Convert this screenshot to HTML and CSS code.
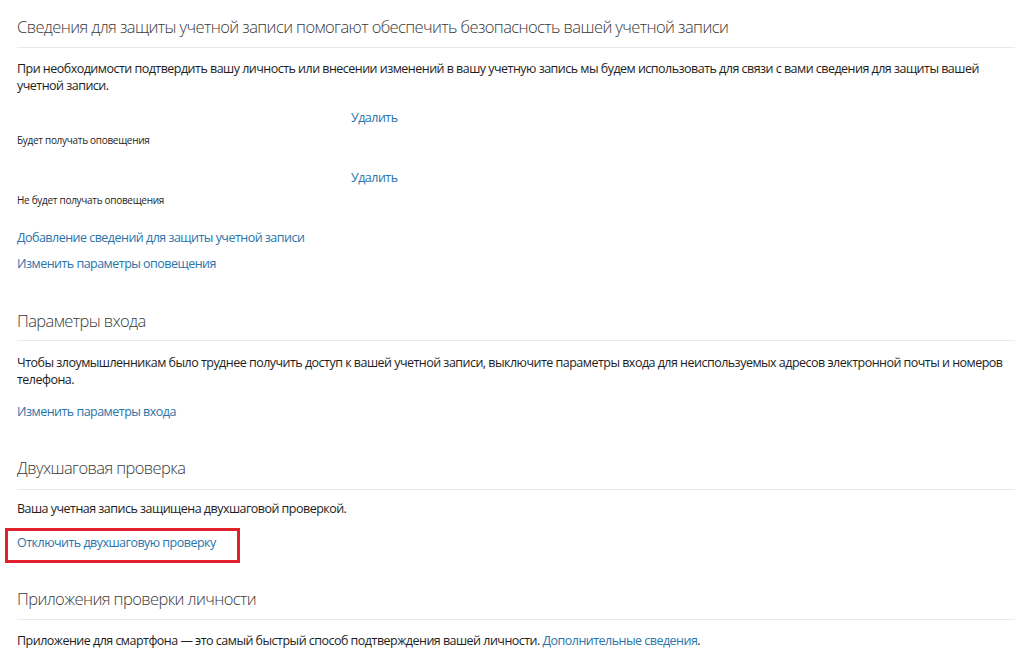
FILE: index.html
```html
<!DOCTYPE html>
<html lang="ru">
<head>
<meta charset="utf-8">
<link rel="stylesheet" href="styles.css">
</head>
<body>
<main class="page">
  <section class="sec sec-first">
    <h2 class="sec-title">Сведения для защиты учетной записи помогают обеспечить безопасность вашей учетной записи</h2>
    <p class="text text-intro">При необходимости подтвердить вашу личность или внесении изменений в вашу учетную запись мы будем использовать для связи с вами сведения для защиты вашей учетной записи.</p>
    <div class="proof">
      <div class="proof-row"><span class="proof-name"></span><a class="link" href="#">Удалить</a></div>
      <div class="proof-note">Будет получать оповещения</div>
    </div>
    <div class="proof proof-next">
      <div class="proof-row"><span class="proof-name"></span><a class="link" href="#">Удалить</a></div>
      <div class="proof-note">Не будет получать оповещения</div>
    </div>
    <a class="link link-block link-add" href="#">Добавление сведений для защиты учетной записи</a>
    <a class="link link-block link-notify" href="#">Изменить параметры оповещения</a>
  </section>

  <section class="sec sec-signin">
    <h2 class="sec-title">Параметры входа</h2>
    <p class="text text-signin">Чтобы злоумышленникам было труднее получить доступ к вашей учетной записи, выключите параметры входа для неиспользуемых адресов электронной почты и номеров телефона.</p>
    <a class="link link-block link-signin" href="#">Изменить параметры входа</a>
  </section>

  <section class="sec sec-twostep">
    <h2 class="sec-title">Двухшаговая проверка</h2>
    <p class="text text-twostep">Ваша учетная запись защищена двухшаговой проверкой.</p>
    <div class="highlight"><a class="link" href="#">Отключить двухшаговую проверку</a></div>
  </section>

  <section class="sec sec-apps">
    <h2 class="sec-title">Приложения проверки личности</h2>
    <p class="text text-apps">Приложение для смартфона — это самый быстрый способ подтверждения вашей личности. <a class="link" href="#">Дополнительные сведения</a>.</p>
  </section>
</main>
</body>
</html>
```

FILE: styles.css
```css
* { box-sizing: border-box; }
html, body { margin: 0; padding: 0; background: #fff; }
body {
  font-family: "Open Sans", "Noto Sans", "Liberation Sans", sans-serif;
  color: #1e1e1e;
  overflow: hidden;
}
.page {
  width: 1015px;
  padding-left: 17px;
}
.sec-title {
  margin: 0;
  font-size: 16.5px;
  font-weight: 300;
  letter-spacing: -0.6px;
  line-height: 24px;
  color: #3a3a3a;
  padding-bottom: 8px;
  border-bottom: 1px solid #e8e8e8;
}
.sec-first { padding-top: 15px; }
.sec-signin { padding-top: 37px; }
.sec-signin .sec-title { padding-bottom: 7px; }
.sec-twostep { padding-top: 36px; }
.sec-twostep .sec-title { padding-bottom: 9px; }
.sec-apps { padding-top: 24px; }
.text {
  margin: 0;
  font-size: 12.5px;
  letter-spacing: -0.52px;
  line-height: 17px;
}
.text-intro { margin-top: 12px; }
.text-signin { margin-top: 13px; }
.text-twostep { margin-top: 10px; }
.text-apps { margin-top: 12px; }
.link {
  color: #2a74ab;
  text-decoration: none;
  font-size: 12.5px;
  letter-spacing: -0.52px;
  line-height: 17px;
}
.link-block { display: block; width: max-content; }
.proof { margin-top: 15px; }
.proof-next { margin-top: 22px; }
.proof-row { display: flex; line-height: 17px; }
.proof-name { width: 334px; }
.proof-note {
  margin-top: 7px;
  font-size: 10px;
  letter-spacing: -0.3px;
  line-height: 14px;
  color: #1e1e1e;
}
.link-add { margin-top: 22px; }
.link-notify { margin-top: 9px; }
.link-signin { margin-top: 15px; }
.highlight {
  margin-top: 11px;
  margin-left: -12px;
  width: 235px;
  height: 35px;
  border: 3px solid #e0212b;
  padding: 3px 0 0 9px;
}
.highlight .link { display: block; line-height: 17px; }
```
